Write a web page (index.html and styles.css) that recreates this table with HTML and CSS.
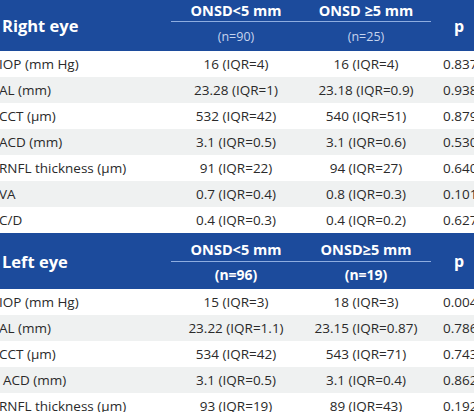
FILE: index.html
```html
<!DOCTYPE html>
<html>
<head>
<meta charset="utf-8">
<link rel="stylesheet" href="styles.css">
</head>
<body>
<div class="page">
  <div class="hdr hdr1">
    <div class="h-label">Right eye</div>
    <div class="h-group">ONSD&lt;5 mm</div>
    <div class="h-group">ONSD ≥5 mm</div>
    <div class="h-p">p</div>
    <div class="h-n">(n=90)</div>
    <div class="h-n">(n=25)</div>
  </div>
  <div class="row"><div class="lbl">IOP (mm Hg)</div><div class="val">16 (IQR=4)</div><div class="val">16 (IQR=4)</div><div class="pv">0.837</div></div>
  <div class="row alt"><div class="lbl">AL (mm)</div><div class="val">23.28 (IQR=1)</div><div class="val">23.18 (IQR=0.9)</div><div class="pv">0.938</div></div>
  <div class="row"><div class="lbl">CCT (μm)</div><div class="val">532 (IQR=42)</div><div class="val">540 (IQR=51)</div><div class="pv">0.879</div></div>
  <div class="row alt"><div class="lbl">ACD (mm)</div><div class="val">3.1 (IQR=0.5)</div><div class="val">3.1 (IQR=0.6)</div><div class="pv">0.530</div></div>
  <div class="row"><div class="lbl">RNFL thickness (μm)</div><div class="val">91 (IQR=22)</div><div class="val">94 (IQR=27)</div><div class="pv">0.640</div></div>
  <div class="row alt"><div class="lbl">VA</div><div class="val">0.7 (IQR=0.4)</div><div class="val">0.8 (IQR=0.3)</div><div class="pv">0.101</div></div>
  <div class="row"><div class="lbl">C/D</div><div class="val">0.4 (IQR=0.3)</div><div class="val">0.4 (IQR=0.2)</div><div class="pv">0.627</div></div>

  <div class="hdr hdr2">
    <div class="h-label">Left eye</div>
    <div class="h-group">ONSD&lt;5 mm</div>
    <div class="h-group">ONSD≥5 mm</div>
    <div class="h-p">p</div>
    <div class="h-n bold">(n=96)</div>
    <div class="h-n bold">(n=19)</div>
  </div>
  <div class="row"><div class="lbl">IOP (mm Hg)</div><div class="val">15 (IQR=3)</div><div class="val">18 (IQR=3)</div><div class="pv">0.004</div></div>
  <div class="row alt"><div class="lbl">AL (mm)</div><div class="val">23.22 (IQR=1.1)</div><div class="val">23.15 (IQR=0.87)</div><div class="pv">0.786</div></div>
  <div class="row"><div class="lbl">CCT (μm)</div><div class="val">534 (IQR=42)</div><div class="val">543 (IQR=71)</div><div class="pv">0.743</div></div>
  <div class="row alt"><div class="lbl indent">ACD (mm)</div><div class="val">3.1 (IQR=0.5)</div><div class="val">3.1 (IQR=0.4)</div><div class="pv">0.862</div></div>
  <div class="row"><div class="lbl">RNFL thickness (μm)</div><div class="val">93 (IQR=19)</div><div class="val">89 (IQR=43)</div><div class="pv">0.192</div></div>
</div>
</body>
</html>
```
FILE: styles.css
```css
html, body {
  margin: 0;
  padding: 0;
  background: #ffffff;
}
.page {
  width: 474px;
  height: 412px;
  overflow: hidden;
  font-family: "Open Sans", "Noto Sans", sans-serif;
  font-size: 13.5px;
  color: #2a2a2a;
}
.hdr {
  display: grid;
  grid-template-columns: 171px 130px 130px 43px;
  background: #1c4b9c;
  color: #ffffff;
  font-weight: bold;
}
.hdr1 {
  grid-template-rows: 22px 29px;
}
.hdr2 {
  grid-template-rows: 29px 27px;
}
.h-label {
  grid-row: 1 / 3;
  display: flex;
  align-items: center;
  padding-left: 2px;
  font-size: 16.5px;
}
.h-group {
  display: flex;
  align-items: center;
  justify-content: center;
  font-size: 14.5px;
  border-bottom: 1.5px solid #8eade0;
}
.hdr2 .h-group {
  padding-top: 4px;
}
.h-p {
  grid-column: 4;
  grid-row: 1 / 3;
  display: flex;
  align-items: center;
  justify-content: center;
  padding-left: 13px;
  font-size: 16px;
}
.h-n {
  display: flex;
  align-items: center;
  justify-content: center;
  font-weight: normal;
  font-size: 12.5px;
  color: #c6d4ee;
}
.h-n.bold {
  font-weight: bold;
  color: #ffffff;
  font-size: 14px;
  padding-bottom: 2px;
}
.row {
  display: grid;
  grid-template-columns: 171px 130px 130px 43px;
  height: 26px;
  align-items: center;
  background: #ffffff;
}
.row.alt {
  background: #eff1f1;
}
.lbl {
  margin-left: -1px;
  white-space: nowrap;
}
.lbl.indent {
  padding-left: 4px;
}
.val {
  text-align: center;
  white-space: nowrap;
}
.pv {
  padding-left: 12px;
  white-space: nowrap;
}
```
